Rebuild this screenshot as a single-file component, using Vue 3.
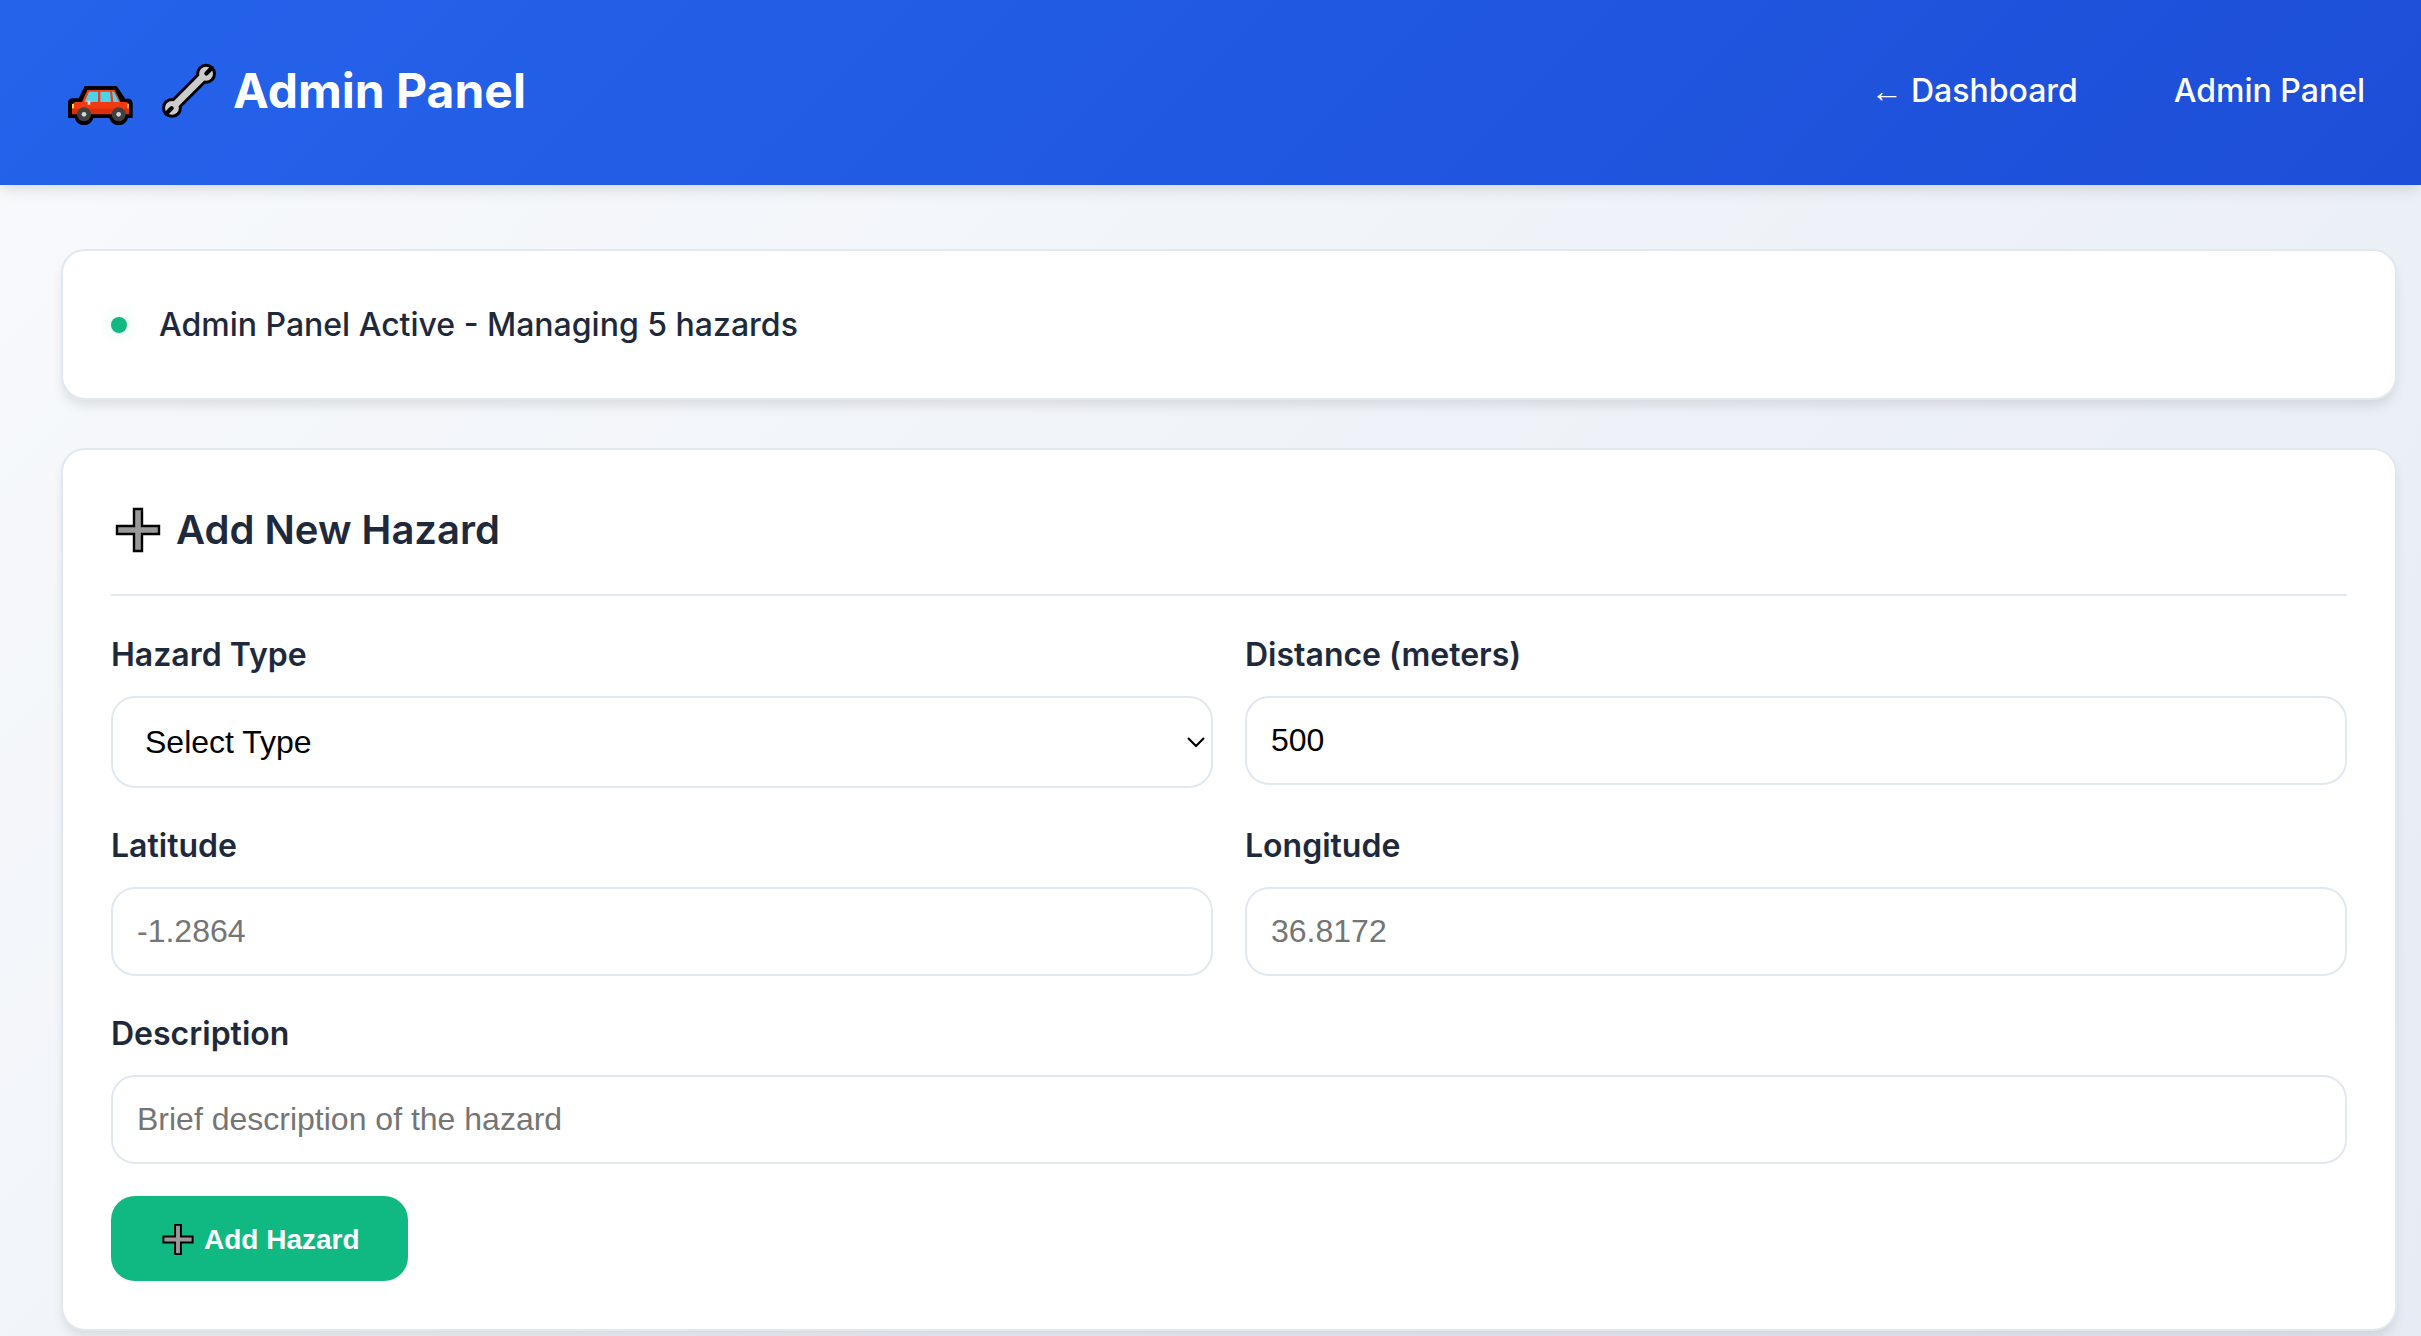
<script setup>
import { ref } from "vue";

const hazardTypes = ["Pothole", "Accident", "Road Work", "Flooding"];

const hazards = ref(5);
const form = ref({
  type: "",
  distance: 500,
  latitude: "",
  longitude: "",
  description: "",
});

function addHazard() {
  hazards.value++;
  form.value = {
    type: "",
    distance: 500,
    latitude: "",
    longitude: "",
    description: "",
  };
}
</script>

<template>
  <div class="page">
    <header class="header">
      <h1 class="logo">
        <svg class="logo-car" viewBox="0 0 195 118" aria-hidden="true">
          <path
            d="M50 2H146L172 40H184Q194 44 194 54V98H180A29 29 0 0 1 124 98H76A29 29 0 0 1 20 98H0V50Q2 40 14 39H32Z"
            fill="#000"
          />
          <circle cx="48" cy="87" r="30" fill="#000" />
          <circle cx="152" cy="87" r="30" fill="#000" />
          <path
            d="M58 14H140L158 50H176Q183 52 183 60V86H12V60Q14 52 22 50H42Z"
            fill="#ef3a12"
          />
          <path d="M12 70H183V87H12Z" fill="#d92f0c" />
          <path d="M63 19H90V50H50Z" fill="#4fd3ea" />
          <path d="M97 19H126L129 50H97Z" fill="#4fd3ea" />
          <path d="M132 19H138L153 50H136Z" fill="#4fd3ea" />
          <path d="M59 46H67V58H59Z" fill="#d5dce0" />
          <path d="M12 56H18V69H12Z" fill="#ffd64a" />
          <path d="M177 56H183V69H177Z" fill="#ffb02e" />
          <circle cx="48" cy="87" r="21" fill="#404040" />
          <circle cx="152" cy="87" r="21" fill="#404040" />
          <circle cx="48" cy="87" r="7" fill="#d6d6d6" />
          <circle cx="152" cy="87" r="7" fill="#d6d6d6" />
        </svg>
        <svg class="logo-wrench" viewBox="0 0 163 165" aria-hidden="true">
          <path d="M30 135L133 32" stroke="#000" stroke-width="38" />
          <circle cx="133" cy="32" r="30" fill="#000" />
          <circle cx="30" cy="135" r="30" fill="#000" />
          <path d="M30 135L133 32" stroke="#ccc" stroke-width="21" />
          <circle cx="133" cy="32" r="21" fill="#ccc" />
          <circle cx="30" cy="135" r="21" fill="#ccc" />
          <path
            d="M134 31L150 15M29 136L13 152"
            stroke="#000"
            stroke-width="13"
            stroke-linecap="round"
          />
        </svg>
        <span>Admin Panel</span>
      </h1>
      <nav class="nav">
        <a href="#dashboard" class="nav-link"
          ><span class="nav-arrow">←</span> Dashboard</a
        >
        <a href="#admin" class="nav-link">Admin Panel</a>
      </nav>
    </header>

    <main class="content">
      <section class="card status">
        <span class="status-dot"></span>
        <span>Admin Panel Active - Managing {{ hazards }} hazards</span>
      </section>

      <section class="card">
        <h2 class="card-title">
          <svg class="title-plus" viewBox="0 0 56 56" aria-hidden="true">
            <path
              d="M23 7H31V24H48V32H31V49H23V32H6V24H23Z"
              fill="#999"
              stroke="#000"
              stroke-width="2.4"
            />
          </svg>
          <span>Add New Hazard</span>
        </h2>

        <form class="form" @submit.prevent="addHazard">
          <div class="form-grid">
            <div class="field">
              <label for="type">Hazard Type</label>
              <div class="select-wrap">
                <select id="type" v-model="form.type">
                  <option value="">Select Type</option>
                  <option v-for="type in hazardTypes" :key="type" :value="type">
                    {{ type }}
                  </option>
                </select>
                <svg class="chevron" viewBox="0 0 20 12" aria-hidden="true">
                  <path
                    d="M2 2L10 10L18 2"
                    fill="none"
                    stroke="#000"
                    stroke-width="2.2"
                  />
                </svg>
              </div>
            </div>
            <div class="field">
              <label for="distance">Distance (meters)</label>
              <input id="distance" v-model="form.distance" type="number" />
            </div>
            <div class="field">
              <label for="latitude">Latitude</label>
              <input
                id="latitude"
                v-model="form.latitude"
                type="number"
                step="any"
                placeholder="-1.2864"
              />
            </div>
            <div class="field">
              <label for="longitude">Longitude</label>
              <input
                id="longitude"
                v-model="form.longitude"
                type="number"
                step="any"
                placeholder="36.8172"
              />
            </div>
          </div>
          <div class="field">
            <label for="description">Description</label>
            <input
              id="description"
              v-model="form.description"
              type="text"
              placeholder="Brief description of the hazard"
            />
          </div>
          <button type="submit" class="btn">
            <svg class="btn-plus" viewBox="0 0 38 38" aria-hidden="true">
              <path
                d="M16 4H22V16H34V22H22V34H16V22H4V16H16Z"
                fill="#999"
                stroke="#000"
                stroke-width="2"
              />
            </svg>
            <span>Add Hazard</span>
          </button>
        </form>
      </section>
    </main>
  </div>
</template>

<style>
body {
  margin: 0;
}
</style>

<style scoped>
* {
  box-sizing: border-box;
}

.page {
  min-height: 100vh;
  background: linear-gradient(135deg, #f8fafc 0%, #e6ebf4 100%);
  color: #1e293b;
  font-family: Inter, "Liberation Sans", sans-serif;
  font-size: 32px;
  line-height: 51px;
}

.header {
  display: flex;
  align-items: center;
  justify-content: space-between;
  padding: 52px 24px 56px 64px;
  background: linear-gradient(135deg, #2563eb 0%, #1d4ed8 100%);
  box-shadow: 0 8px 12px -2px rgba(0, 0, 0, 0.1);
  color: #fff;
}

.logo {
  display: flex;
  align-items: center;
  margin: 0;
  font-size: 48px;
  font-weight: 700;
  line-height: 77px;
}

.logo-car {
  width: 65px;
  height: 40px;
  margin: 28px 29px 0 4px;
}

.logo-wrench {
  width: 54px;
  height: 55px;
  margin-right: 17px;
}

.nav {
  display: flex;
  gap: 32px;
}

.nav-link {
  padding: 12px 32px;
  color: #fff;
  font-weight: 500;
  text-decoration: none;
}

.nav-arrow {
  font-family: "Liberation Sans", Arial, sans-serif;
  line-height: 1;
}

.content {
  display: flex;
  flex-direction: column;
  gap: 48px;
  padding: 64px 24px 0 61px;
}

.card {
  padding: 48px;
  border: 2px solid #e2e8f0;
  border-radius: 24px;
  background: #fff;
  box-shadow: 0 8px 12px -2px rgba(0, 0, 0, 0.1);
}

.status {
  display: flex;
  align-items: center;
  gap: 32px;
  font-weight: 500;
}

.status-dot {
  width: 16px;
  height: 16px;
  border-radius: 50%;
  background: #10b981;
  box-shadow: 0 0 16px rgba(16, 185, 129, 0.2);
}

.card-title {
  display: flex;
  align-items: center;
  gap: 9px;
  margin: 0 0 33px;
  padding-bottom: 32px;
  border-bottom: 2px solid #e2e8f0;
  font-size: 40px;
  font-weight: 600;
  line-height: 64px;
}

.title-plus {
  width: 56px;
  height: 56px;
}

.form,
.form-grid {
  display: grid;
  gap: 32px;
}

.form-grid {
  grid-template-columns: 1fr 1fr;
}

.field label {
  display: block;
  margin-bottom: 16px;
  font-weight: 600;
}

.field input,
.field select {
  display: block;
  width: 100%;
  height: 89px;
  padding: 24px;
  border: 2px solid #e2e8f0;
  border-radius: 24px;
  outline: none;
  background: #fff;
  color: #000;
  font-family: "Liberation Sans", Arial, sans-serif;
  font-size: 32px;
  line-height: 37px;
}

.field input::placeholder {
  color: #757575;
}

.field input[type="number"] {
  appearance: textfield;
}

.field select {
  height: 92px;
  padding: 24px 32px;
  appearance: none;
}

.select-wrap {
  position: relative;
}

.chevron {
  position: absolute;
  top: 40px;
  right: 7px;
  width: 20px;
  height: 12px;
  pointer-events: none;
}

.btn {
  display: flex;
  align-items: center;
  justify-self: start;
  gap: 7px;
  padding: 25px 48px 23px;
  border: none;
  border-radius: 24px;
  background: #10b981;
  color: #fff;
  font-family: "Liberation Sans", Arial, sans-serif;
  font-size: 28px;
  font-weight: 700;
  line-height: 37px;
  cursor: pointer;
}

.btn-plus {
  width: 38px;
  height: 37px;
}
</style>
